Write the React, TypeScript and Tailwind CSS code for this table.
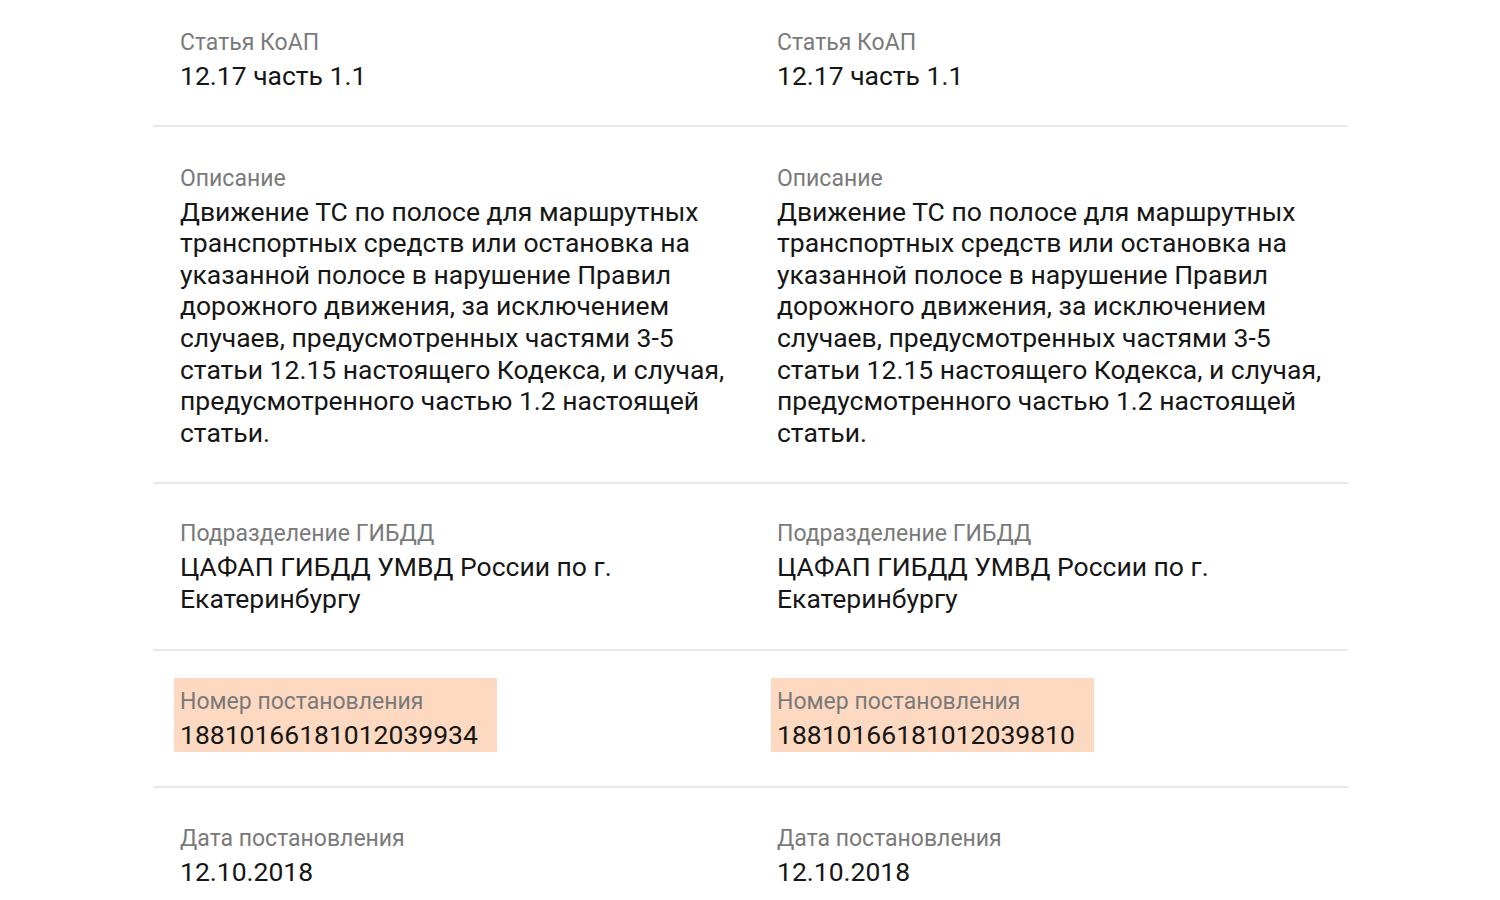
import React from "react";

type Row = { label: string; value: string; highlight?: boolean; pt: string; last?: boolean };

const desc =
  "Движение ТС по полосе для маршрутных транспортных средств или остановка на указанной полосе в нарушение Правил дорожного движения, за исключением случаев, предусмотренных частями 3-5 статьи 12.15 настоящего Кодекса, и случая, предусмотренного частью 1.2 настоящей статьи.";

const makeRows = (num: string): Row[] => [
  { label: "Статья КоАП", value: "12.17 часть 1.1", pt: "pt-[27px] pb-[33px]" },
  { label: "Описание", value: desc, pt: "pt-[36px] pb-[34px]" },
  { label: "Подразделение ГИБДД", value: "ЦАФАП ГИБДД УМВД России по г. Екатеринбургу", pt: "pt-[34px] pb-[34px]" },
  { label: "Номер постановления", value: num, highlight: true, pt: "pt-[35px] pb-[34px]" },
  { label: "Дата постановления", value: "12.10.2018", last: true, pt: "pt-[35px] pb-[20px]" },
];

function Field({ row }: { row: Row }) {
  const inner = (
    <>
      <div className="text-[23px] leading-[32px] text-[#7a7a7a]">{row.label}</div>
      <div className="text-[26.5px] leading-[31.6px] text-[#161616] mt-[1px]">{row.value}</div>
    </>
  );
  return (
    <div
      className={
        row.pt +
        (row.last ? "" : " border-b-2 border-[#e8e8e8]") +
        " pl-[27px] pr-[18px]"
      }
    >
      {row.highlight ? (
        <div className="flex">
          <div className="-ml-[6px] -mt-[8px] pl-[6px] pt-[8px] pb-[2px] pr-[19px] bg-[#fdd9c1]">
            {inner}
          </div>
        </div>
      ) : (
        inner
      )}
    </div>
  );
}

function Column({ num }: { num: string }) {
  return (
    <div className="flex flex-col">
      {makeRows(num).map((r, i) => (
        <Field key={i} row={r} />
      ))}
    </div>
  );
}

export default function App() {
  return (
    <div
      className="w-[1500px] h-[900px] bg-white overflow-hidden"
      style={{ fontFamily: "Roboto, 'Noto Sans', sans-serif" }}
    >
      <div className="ml-[153px] w-[1195px] grid grid-cols-[597px_598px]">
        <Column num="18810166181012039934" />
        <Column num="18810166181012039810" />
      </div>
    </div>
  );
}
